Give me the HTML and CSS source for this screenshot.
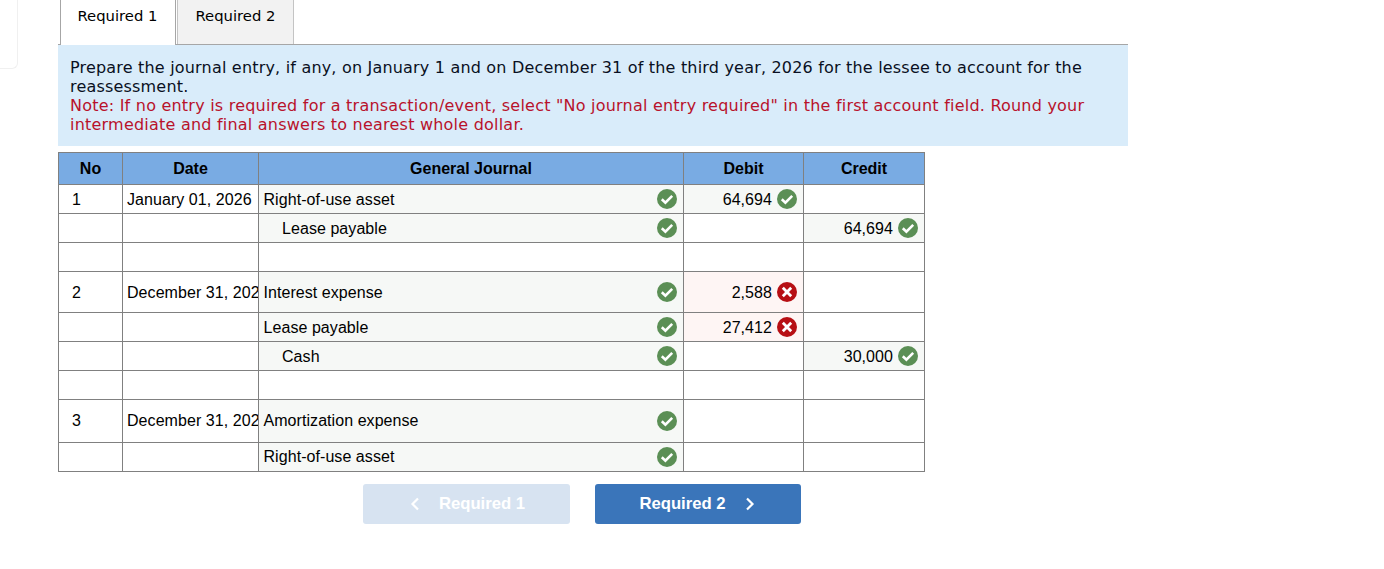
FILE: index.html
```html
<!DOCTYPE html>
<html lang="en">
<head>
<meta charset="utf-8">
<title>Journal entry</title>
<link rel="stylesheet" href="styles.css">
</head>
<body>
<svg class="defs" width="0" height="0" aria-hidden="true">
  <symbol id="ok" viewBox="0 0 20 20">
    <circle cx="10" cy="10" r="10" fill="#5b8f55"/>
    <path d="M4.8 10.2 8.4 13.6 15.2 6.8" fill="none" stroke="#fff" stroke-width="2.6"/>
  </symbol>
  <symbol id="bad" viewBox="0 0 20 20">
    <circle cx="10" cy="10" r="10" fill="#b70f14"/>
    <path d="M5.8 5.8 14.2 14.2M14.2 5.8 5.8 14.2" fill="none" stroke="#fff" stroke-width="2.8"/>
  </symbol>
</svg>
<div class="page">
  <div class="stub"></div>
  <main class="main">
    <nav class="tabs">
      <div class="tab tab-active">Required 1</div>
      <div class="tab">Required 2</div>
    </nav>
    <section class="prompt">
      <p>Prepare the journal entry, if any, on January 1 and on December 31 of the third year, 2026 for the lessee to account for the reassessment.</p>
      <p class="note">Note: If no entry is required for a transaction/event, select "No journal entry required" in the first account field. Round your intermediate and final answers to nearest whole dollar.</p>
    </section>
    <table class="journal">
      <colgroup>
        <col class="c-no"><col class="c-date"><col class="c-acct"><col class="c-amt"><col class="c-amt2">
      </colgroup>
      <thead>
        <tr><th>No</th><th>Date</th><th>General Journal</th><th>Debit</th><th>Credit</th></tr>
      </thead>
      <tbody>
        <tr>
          <td class="no">1</td><td class="date"><div class="clip">January 01, 2026</div></td>
          <td class="acct filled"><div class="cell"><span>Right-of-use asset</span><svg class="ic"><use href="#ok"/></svg></div></td>
          <td class="filled"><div class="cell end"><span>64,694</span><svg class="ic"><use href="#ok"/></svg></div></td>
          <td></td>
        </tr>
        <tr>
          <td></td><td></td>
          <td class="acct filled"><div class="cell"><span class="indent">Lease payable</span><svg class="ic"><use href="#ok"/></svg></div></td>
          <td></td>
          <td class="filled"><div class="cell end"><span>64,694</span><svg class="ic"><use href="#ok"/></svg></div></td>
        </tr>
        <tr><td></td><td></td><td></td><td></td><td></td></tr>
        <tr class="tall">
          <td class="no">2</td><td class="date"><div class="clip">December 31, 2026</div></td>
          <td class="acct filled"><div class="cell"><span>Interest expense</span><svg class="ic"><use href="#ok"/></svg></div></td>
          <td class="wrong"><div class="cell end"><span>2,588</span><svg class="ic"><use href="#bad"/></svg></div></td>
          <td></td>
        </tr>
        <tr>
          <td></td><td></td>
          <td class="acct filled"><div class="cell"><span>Lease payable</span><svg class="ic"><use href="#ok"/></svg></div></td>
          <td class="wrong"><div class="cell end"><span>27,412</span><svg class="ic"><use href="#bad"/></svg></div></td>
          <td></td>
        </tr>
        <tr>
          <td></td><td></td>
          <td class="acct filled"><div class="cell"><span class="indent">Cash</span><svg class="ic"><use href="#ok"/></svg></div></td>
          <td></td>
          <td class="filled"><div class="cell end"><span>30,000</span><svg class="ic"><use href="#ok"/></svg></div></td>
        </tr>
        <tr><td></td><td></td><td></td><td></td><td></td></tr>
        <tr class="taller">
          <td class="no">3</td><td class="date"><div class="clip">December 31, 2026</div></td>
          <td class="acct filled"><div class="cell"><span>Amortization expense</span><svg class="ic"><use href="#ok"/></svg></div></td>
          <td></td><td></td>
        </tr>
        <tr class="last">
          <td></td><td></td>
          <td class="acct filled"><div class="cell"><span>Right-of-use asset</span><svg class="ic"><use href="#ok"/></svg></div></td>
          <td></td><td></td>
        </tr>
      </tbody>
    </table>
    <div class="pager">
      <button class="btn btn-off" type="button" disabled>
        <svg class="chev" viewBox="0 0 10 14"><path d="M8 1.5 2.5 7 8 12.5" fill="none" stroke="currentColor" stroke-width="2.2"/></svg>
        <span>Required 1</span>
      </button>
      <button class="btn btn-on" type="button">
        <span>Required 2</span>
        <svg class="chev" viewBox="0 0 10 14"><path d="M2 1.5 7.5 7 2 12.5" fill="none" stroke="currentColor" stroke-width="2.2"/></svg>
      </button>
    </div>
  </main>
</div>
</body>
</html>
```
FILE: styles.css
```css
* { box-sizing: border-box; }
html, body { margin: 0; padding: 0; background: #fff; }
body { font-family: "Liberation Sans", Arial, sans-serif; font-size: 16px; color: #000; overflow: hidden; }
.defs { display: block; height: 0; }
.page { display: flex; align-items: flex-start; }
.stub {
  flex: none; width: 18px; height: 69px; margin-right: 40px;
  border: 1px solid #f0f0f0; border-left: 0; border-top: 0;
  border-bottom-right-radius: 6px;
}
.main { flex: none; width: 1070px; }

.tabs { display: flex; height: 45px; padding-left: 2px; border-bottom: 1px solid #a6a6a6; }
.tab {
  width: 117px; height: 44px; padding-top: 7px; text-align: center;
  font-family: "DejaVu Sans", Verdana, sans-serif; font-size: 14.8px; line-height: 18px;
  background: #f2f2f2; border: 1px solid #c4c4c4; border-top: 0; border-bottom: 0;
}
.tab-active { background: #fff; border-color: #a6a6a6; height: 45px; width: 116px; margin-right: 1px; padding-right: 1px; }

.prompt {
  padding: 13px 12px 12px; background: #d9ecfa;
  font-family: "DejaVu Sans", Verdana, sans-serif; font-size: 16px; line-height: 19px; letter-spacing: .19px; color: #0a1022;
}
.prompt p { margin: 0; }
.prompt .note { color: #b8122b; letter-spacing: .22px; }

.journal {
  margin-top: 6px; width: 866px; table-layout: fixed; border-collapse: collapse;
  font-size: 16px; line-height: 18px; letter-spacing: .06px;
}
.c-no { width: 64px; }
.c-date { width: 136px; }
.c-acct { width: 425px; }
.c-amt { width: 120px; }
.c-amt2 { width: 121px; }
.journal th, .journal td { border: 1px solid #808080; padding: 0; }
.journal th { height: 32px; background: #79abe3; font-weight: 700; text-align: center; color: #000; letter-spacing: 0; }
.journal td { height: 29px; vertical-align: middle; }
.journal .tall td { height: 41px; }
.journal .taller td { height: 43px; }
.journal .no { padding-left: 13px; padding-top: 2px; }
.journal .date { padding-left: 4px; padding-top: 2px; }
.journal .acct { padding-left: 4.5px; }
.clip { overflow: hidden; white-space: nowrap; }
.filled { background: #f6f8f6; }
.wrong { background: #fef5f4; }
.cell { display: flex; align-items: center; justify-content: space-between; padding-right: 6px; }
.cell span { padding-top: 2px; }
.cell.end { justify-content: flex-end; gap: 5px; }
.journal .taller .no, .journal .taller .date { padding-top: 0; }
.taller .cell span, .last .cell span { padding-top: 0; }
.cell .indent { padding-left: 18.5px; }
.ic { flex: none; width: 20px; height: 20px; display: block; }

.pager { display: flex; gap: 25px; margin-top: 12px; margin-left: 305px; }
.btn {
  display: flex; align-items: center; justify-content: center; gap: 19px;
  width: 207px; height: 40px; padding: 0 0 1px; border: 0; border-radius: 3px;
  font-family: "Liberation Sans", Arial, sans-serif; font-size: 16.7px; font-weight: 700; color: #fff;
}
.btn-off { background: #d7e3f1; padding-left: 2px; }
.btn-on { background: #3a75ba; width: 206px; padding-right: 2px; }
.chev { width: 10px; height: 14px; display: block; }
```
